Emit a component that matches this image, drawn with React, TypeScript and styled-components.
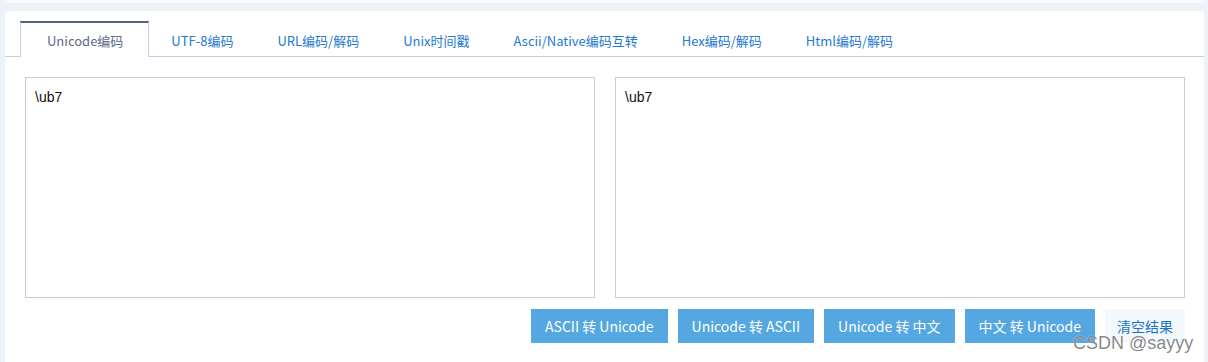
import { useState } from "react";
import styled, { createGlobalStyle } from "styled-components";

const GlobalStyle = createGlobalStyle`
  html, body {
    margin: 0;
    padding: 0;
    background: #edf2f9;
    overflow: hidden;
  }
  body {
    font-family: "Noto Sans CJK SC", "Liberation Sans", sans-serif;
  }
`;

const tabs = [
  "Unicode编码",
  "UTF-8编码",
  "URL编码/解码",
  "Unix时间戳",
  "Ascii/Native编码互转",
  "Hex编码/解码",
  "Html编码/解码",
];

const actions = [
  "ASCII 转 Unicode",
  "Unicode 转 ASCII",
  "Unicode 转 中文",
  "中文 转 Unicode",
];

function App() {
  const [active, setActive] = useState(0);
  const [input, setInput] = useState("\\ub7");
  const [output, setOutput] = useState("\\ub7");

  return (
    <Page>
      <GlobalStyle />
      <TopStrip />
      <Card>
        <TabBar>
          {tabs.map((t, i) => (
            <Tab key={t} $active={i === active} onClick={() => setActive(i)}>
              {t}
            </Tab>
          ))}
        </TabBar>
        <Body>
          <Editors>
            <Editor value={input} onChange={e => setInput(e.target.value)} />
            <Editor value={output} onChange={e => setOutput(e.target.value)} />
          </Editors>
          <Actions>
            {actions.map(a => (
              <ActionButton key={a}>{a}</ActionButton>
            ))}
            <ClearButton onClick={() => setOutput("")}>清空结果</ClearButton>
          </Actions>
        </Body>
      </Card>
      <Watermark>CSDN @sayyy</Watermark>
    </Page>
  );
}
export default App;

const Page = styled.div`
  position: relative;
  width: 1208px;
  height: 362px;
  overflow: hidden;
`;

const TopStrip = styled.div`
  height: 3px;
  margin: 0 4px 8px 5px;
  background: #f8fafd;
`;

const Card = styled.div`
  margin: 0 4px 0 5px;
  background: #fff;
  border-radius: 3px 3px 0 0;
  padding-top: 10px;
  height: 400px;
`;

const TabBar = styled.div`
  display: flex;
  padding-left: 15px;
  border-bottom: 1px solid #c3cfe2;
`;

const Tab = styled.div<{ $active: boolean }>`
  box-sizing: border-box;
  height: 36px;
  margin-bottom: -1px;
  padding: ${p => (p.$active ? "0 25px 0 26px" : "0 21px")};
  display: flex;
  align-items: center;
  font-size: 13px;
  cursor: pointer;
  color: ${p => (p.$active ? "#5d6a84" : "#2479cf")};
  background: ${p => (p.$active ? "#fff" : "transparent")};
  border-top: 2px solid ${p => (p.$active ? "#56617c" : "transparent")};
  border-left: 1px solid ${p => (p.$active ? "#c3cfe2" : "transparent")};
  border-right: 1px solid ${p => (p.$active ? "#c3cfe2" : "transparent")};
`;

const Body = styled.div`
  padding: 20px 19px 0 20px;
`;

const Editors = styled.div`
  display: grid;
  grid-template-columns: 1fr 1fr;
  gap: 20px;
`;

const Editor = styled.textarea`
  box-sizing: border-box;
  height: 221px;
  resize: none;
  border: 1px solid #c7cdd8;
  padding: 10px 9px;
  font-family: "Liberation Sans", "Noto Sans CJK SC", sans-serif;
  font-size: 14px;
  line-height: 18px;
  color: #111;
  outline: none;
`;

const Actions = styled.div`
  display: flex;
  justify-content: flex-end;
  gap: 10px;
  margin-top: 11px;
`;

const ActionButton = styled.button`
  height: 34px;
  padding: 0 14px;
  border: none;
  background: #55a7e2;
  color: #fff;
  font-family: "Noto Sans CJK SC", "Liberation Sans", sans-serif;
  font-size: 14px;
  cursor: pointer;
`;

const ClearButton = styled(ActionButton)`
  background: #f3f8fd;
  color: #1b74c9;
  padding: 0 12px;
`;

const Watermark = styled.div`
  position: absolute;
  left: 1073px;
  top: 333px;
  font-family: "Liberation Sans", sans-serif;
  font-size: 18px;
  color: rgba(95, 95, 95, 0.75);
  text-shadow: 0 0 1px #fff;
  pointer-events: none;
`;
